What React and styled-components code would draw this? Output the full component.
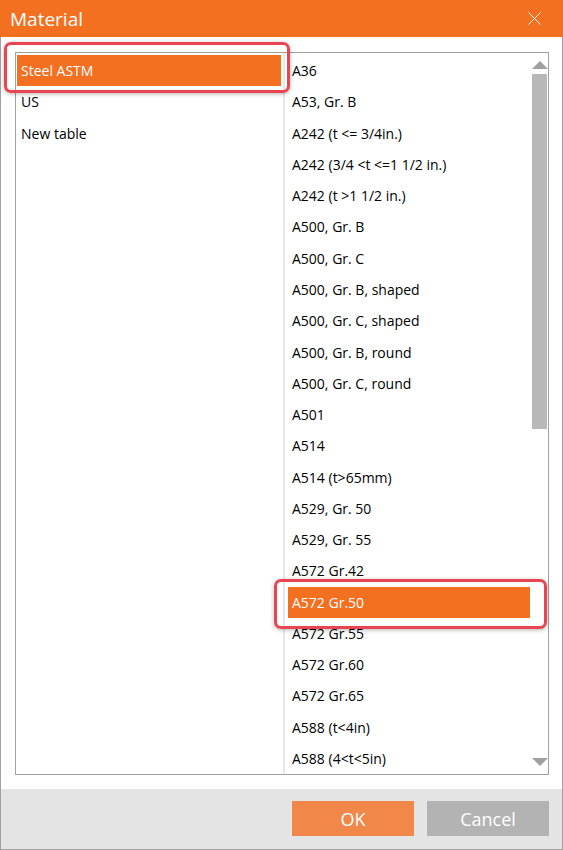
import React from 'react';
import styled, { createGlobalStyle } from 'styled-components';

const GlobalStyle = createGlobalStyle`
  html, body {
    margin: 0;
    padding: 0;
    background: #ffffff;
  }
  body {
    font-family: 'Open Sans', 'Noto Sans', sans-serif;
  }
`;

const ORANGE = '#f37021';

const Window = styled.div`
  width: 563px;
  height: 850px;
  box-sizing: border-box;
  display: flex;
  flex-direction: column;
  border: 1px solid #a0a0a0;
  border-top: none;
  background: #ffffff;
`;

const TitleBar = styled.div`
  height: 37px;
  margin: 0 -1px;
  display: flex;
  align-items: center;
  justify-content: space-between;
  padding: 0 22px 0 10px;
  background: ${ORANGE};
  color: #ffffff;
  font-size: 19px;
  flex-shrink: 0;
`;

const Body = styled.div`
  flex: 1;
  padding: 15px 13px 14px 14px;
  display: flex;
  min-height: 0;
`;

const ListBox = styled.div`
  flex: 1;
  display: flex;
  border: 1px solid #a0a0a0;
`;

const TablePane = styled.div`
  width: 267px;
  padding-top: 2px;
  border-right: 2px solid #e8e8e8;
`;

const MaterialPane = styled.div`
  flex: 1;
  display: flex;
`;

const Items = styled.div`
  flex: 1;
  padding-top: 2px;
`;

const Item = styled.div`
  position: relative;
  height: 31.27px;
  margin: ${(p) => p.$margin};
  padding-left: 4px;
  display: flex;
  align-items: center;
  font-size: 14px;
  color: ${(p) => (p.$selected ? '#ffffff' : '#000000')};
  background: ${(p) => (p.$selected ? ORANGE : 'transparent')};
  white-space: nowrap;
`;

const Callout = styled.div`
  position: absolute;
  top: ${(p) => p.$top}px;
  right: ${(p) => p.$right}px;
  bottom: ${(p) => p.$bottom}px;
  left: ${(p) => p.$left}px;
  border: 3px solid #e84452;
  border-radius: 7px;
  box-shadow: 0 1px 4px rgba(0, 0, 0, 0.3);
  pointer-events: none;
`;

const ScrollBar = styled.div`
  width: 15px;
  margin-right: 1px;
  display: flex;
  flex-direction: column;
  align-items: center;
  padding-top: 8px;
`;

const Arrow = styled.div`
  width: 0;
  height: 0;
  border-left: 8px solid transparent;
  border-right: 8px solid transparent;
  ${(p) =>
    p.$down
      ? 'border-top: 8px solid #a0a0a0; margin-top: auto; margin-bottom: 8px;'
      : 'border-bottom: 8px solid #a0a0a0;'}
`;

const Thumb = styled.div`
  width: 15px;
  height: 355px;
  margin-top: 5px;
  background: #b8b8b8;
`;

const Footer = styled.div`
  height: 60px;
  flex-shrink: 0;
  box-sizing: border-box;
  background: #e4e4e4;
  display: flex;
  justify-content: flex-end;
  align-items: flex-start;
  gap: 13px;
  padding: 12px 13px 0 0;
`;

const Button = styled.button`
  width: 122px;
  height: 35px;
  border: none;
  border-radius: 0;
  font-family: inherit;
  font-size: 18px;
  color: #ffffff;
  background: ${(p) => (p.$primary ? '#f1884a' : '#b3b3b3')};
`;

const tables = ['Steel ASTM', 'US', 'New table'];

const materials = [
  'A36',
  'A53, Gr. B',
  'A242 (t <= 3/4in.)',
  'A242 (3/4 <t <=1 1/2 in.)',
  'A242 (t >1 1/2 in.)',
  'A500, Gr. B',
  'A500, Gr. C',
  'A500, Gr. B, shaped',
  'A500, Gr. C, shaped',
  'A500, Gr. B, round',
  'A500, Gr. C, round',
  'A501',
  'A514',
  'A514 (t>65mm)',
  'A529, Gr. 50',
  'A529, Gr. 55',
  'A572 Gr.42',
  'A572 Gr.50',
  'A572 Gr.55',
  'A572 Gr.60',
  'A572 Gr.65',
  'A588 (t<4in)',
  'A588 (4<t<5in)',
];

const CloseIcon = () => (
  <svg width="13" height="13" viewBox="0 0 13 13">
    <path d="M0.5 0.5 L12.5 12.5 M12.5 0.5 L0.5 12.5" stroke="#ffffff" strokeWidth="1" fill="none" />
  </svg>
);

export default function App() {
  return (
    <>
      <GlobalStyle />
      <Window>
        <TitleBar>
          <span>Material</span>
          <CloseIcon />
        </TitleBar>
        <Body>
          <ListBox>
            <TablePane>
              {tables.map((t, i) => (
                <Item key={t} $selected={i === 0} $margin="0 2px 0 1px">
                  {t}
                  {i === 0 && <Callout $top={-13} $right={-9} $bottom={-7} $left={-13} />}
                </Item>
              ))}
            </TablePane>
            <MaterialPane>
              <Items>
                {materials.map((m) => (
                  <Item key={m} $selected={m === 'A572 Gr.50'} $margin="0 2px 0 3px">
                    {m}
                    {m === 'A572 Gr.50' && <Callout $top={-8} $right={-17} $bottom={-11} $left={-14} />}
                  </Item>
                ))}
              </Items>
              <ScrollBar>
                <Arrow />
                <Thumb />
                <Arrow $down />
              </ScrollBar>
            </MaterialPane>
          </ListBox>
        </Body>
        <Footer>
          <Button $primary>OK</Button>
          <Button>Cancel</Button>
        </Footer>
      </Window>
    </>
  );
}
